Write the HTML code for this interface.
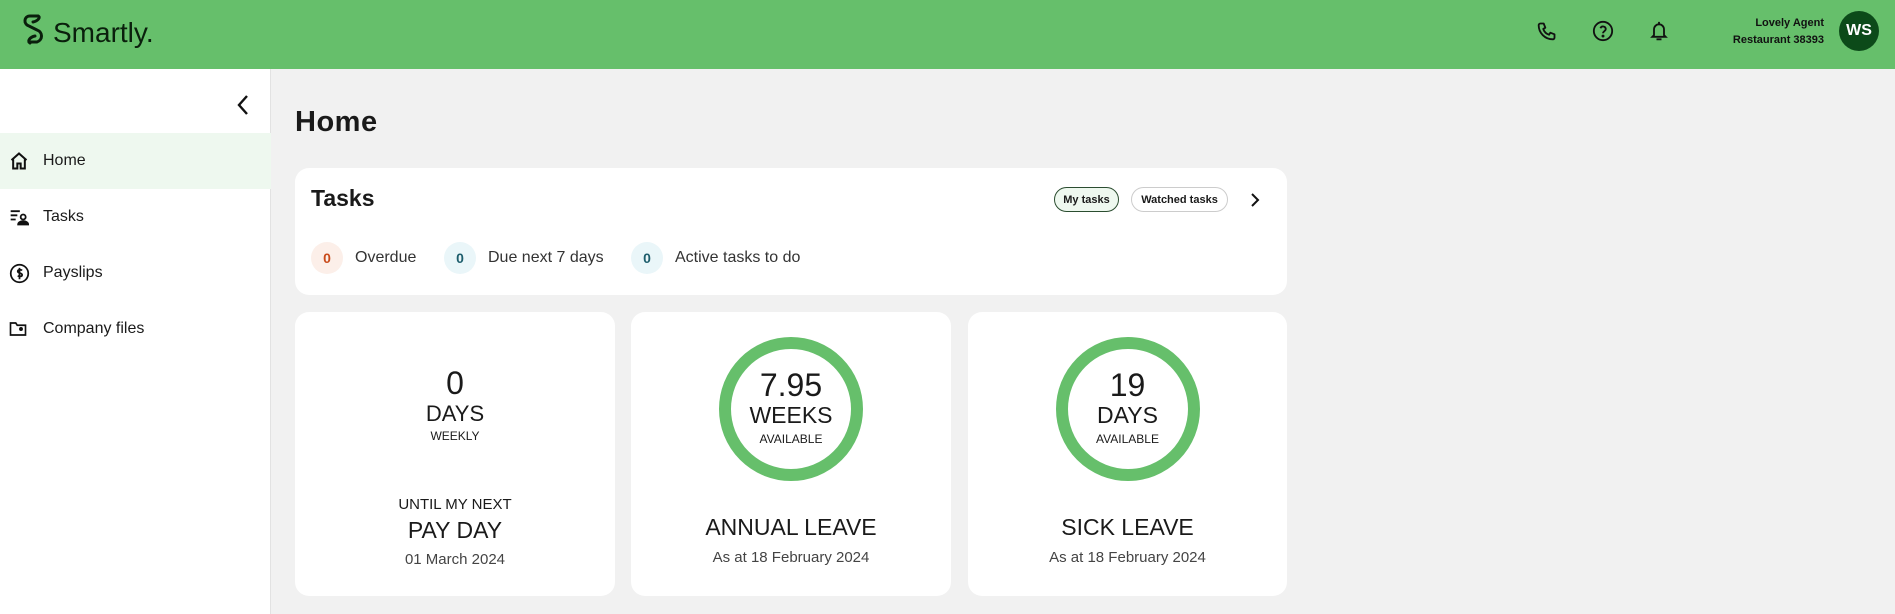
<!DOCTYPE html>
<html><head><meta charset="utf-8"><style>
*{box-sizing:border-box;margin:0;padding:0}
body{width:1895px;height:614px;overflow:hidden;background:#f1f1f1;font-family:"Liberation Sans",sans-serif;color:#1a1a1a;position:relative}
.hdr{position:absolute;left:0;top:0;width:1895px;height:69px;background:#66bf6b}
.side{position:absolute;left:0;top:69px;width:271px;height:545px;background:#fff;border-right:1px solid #e2e2e2}
.nav{position:absolute;left:0;width:271px;height:56px;display:flex;align-items:center;font-size:16px}
.nav svg{position:absolute;left:9px}
.nav span{position:absolute;left:43px}
.card{position:absolute;background:#fff;border-radius:14px}
.c{position:absolute;text-align:center;width:100%;left:0}
.pill{position:absolute;height:25px;border-radius:13px;font-size:11px;font-weight:bold;display:flex;align-items:center;justify-content:center}
.cnt{position:absolute;top:74px;display:flex;align-items:center;font-size:16px;color:#333}
.cnt b{width:32px;height:32px;border-radius:50%;display:inline-flex;align-items:center;justify-content:center;font-size:14px;margin-right:12px}
</style></head><body>
<div class="hdr">
 <svg style="position:absolute;left:21px;top:13px" width="26" height="34" viewBox="0 0 26 34" fill="none" stroke="#0a1f0c" stroke-width="3" stroke-linecap="round"><path d="M17 3 L9 3 C3 3 2 11 8 13 L16 17 C22 19 22 27 16 29 L8 29"/><path d="M12 9 C17 8 20 4 17 3"/><path d="M14 23 C9 24 6 28 9 30"/></svg>
 <div style="position:absolute;left:53px;top:17px;font-size:28px;color:#0a1f0c">Smartly.</div>
 <svg style="position:absolute;left:1537px;top:21px" width="20" height="20" viewBox="0 0 24 24" fill="none" stroke="#111" stroke-width="2.2" stroke-linejoin="round"><path d="M4 3h4l2 5-2.5 1.5a11 11 0 0 0 7 7L16 14l5 2v4a2 2 0 0 1-2 2A17 17 0 0 1 2 5a2 2 0 0 1 2-2z"/></svg>
 <svg style="position:absolute;left:1592px;top:20px" width="22" height="22" viewBox="0 0 24 24" fill="none" stroke="#111" stroke-width="2"><circle cx="12" cy="12" r="10"/><path d="M9.2 9a3 3 0 0 1 5.8 1c0 2-3 2.5-3 4.5"/><circle cx="12" cy="17.5" r=".6" fill="#111"/></svg>
 <svg style="position:absolute;left:1649px;top:20px" width="20" height="22" viewBox="0 0 24 26" fill="none" stroke="#111" stroke-width="2.2"><path d="M12 2v2M6 18V11a6 6 0 0 1 12 0v7l2 2H4z M9 23h6"/></svg>
 <div style="position:absolute;right:71px;top:15px;text-align:right;font-size:11px;font-weight:bold;line-height:17px;color:#111">Lovely Agent<br>Restaurant 38393</div>
 <div style="position:absolute;left:1839px;top:11px;width:40px;height:40px;border-radius:50%;background:#0c4a19;color:#fff;font-weight:bold;font-size:16px;display:flex;align-items:center;justify-content:center">WS</div>
</div>
<div class="side">
 <svg style="position:absolute;left:236px;top:25px" width="14" height="22" viewBox="0 0 14 22" fill="none" stroke="#111" stroke-width="2.4"><path d="M11 2 L3 11 L11 20"/></svg>
 <div class="nav" style="top:64px;background:#eef8ef"><svg width="20" height="20" viewBox="0 0 24 24" fill="none" stroke="#111" stroke-width="2.4"><path d="M3 11 L12 3 L21 11 M5 10v11h5v-6h4v6h5V10"/></svg><span>Home</span></div>
 <div class="nav" style="top:120px"><svg width="20" height="20" viewBox="0 0 24 24" fill="none" stroke="#111" stroke-width="2.2"><path d="M2 5h11M2 10h8M2 15h6"/><circle cx="17" cy="12" r="3"/><path d="M11 21a6 4 0 0 1 12 0z" fill="#111"/></svg><span>Tasks</span></div>
 <div class="nav" style="top:176px"><svg width="21" height="21" viewBox="0 0 24 24" fill="none" stroke="#111" stroke-width="2"><circle cx="12" cy="12" r="10"/><path d="M15 8.5c-1-1-5-1.5-5 1s5 1.5 5 4-4 2-5 1M12 5.5v13"/></svg><span>Payslips</span></div>
 <div class="nav" style="top:232px"><svg width="18" height="16" viewBox="0 0 24 20" fill="none" stroke="#111" stroke-width="2.2"><path d="M2 2h7l2 3h11v13H2z"/><circle cx="16" cy="10" r="1.5" fill="#111"/></svg><span>Company files</span></div>
</div>
<div style="position:absolute;left:295px;top:106px;font-size:29px;font-weight:bold;color:#1a1a1a;letter-spacing:.5px">Home</div>
<div class="card" style="left:295px;top:168px;width:992px;height:127px">
 <div style="position:absolute;left:16px;top:17px;font-size:23px;font-weight:bold">Tasks</div>
 <div class="pill" style="left:759px;top:19px;width:65px;border:1.5px solid #2b4d30;background:#eef8ef">My tasks</div>
 <div class="pill" style="left:836px;top:19px;width:97px;border:1.5px solid #ccc">Watched tasks</div>
 <svg style="position:absolute;left:955px;top:24px" width="10" height="16" viewBox="0 0 10 16" fill="none" stroke="#111" stroke-width="2"><path d="M2 2l6 6-6 6"/></svg>
 <div class="cnt" style="left:16px"><b style="background:#fcefe9;color:#c94a1a">0</b>Overdue</div>
 <div class="cnt" style="left:149px"><b style="background:#eaf6f9;color:#1d5d6c">0</b>Due next 7 days</div>
 <div class="cnt" style="left:336px"><b style="background:#eaf6f9;color:#1d5d6c">0</b>Active tasks to do</div>
</div>
<div class="card" style="left:295px;top:312px;width:320px;height:284px">
 <div class="c" style="top:53px;font-size:32px">0</div>
 <div class="c" style="top:89px;font-size:22px">DAYS</div>
 <div class="c" style="top:117px;font-size:12px">WEEKLY</div>
 <div class="c" style="top:184px;font-size:15px">UNTIL MY NEXT</div>
 <div class="c" style="top:205px;font-size:23px">PAY DAY</div>
 <div class="c" style="top:239px;font-size:15px;color:#444">01 March 2024</div>
</div>
<div class="card" style="left:631px;top:312px;width:320px;height:284px">
 <div style="position:absolute;left:88px;top:25px;width:144px;height:144px;border-radius:50%;border:12px solid #66bf6b"></div>
 <div class="c" style="top:55px;font-size:32px">7.95</div>
 <div class="c" style="top:90px;font-size:23px">WEEKS</div>
 <div class="c" style="top:120px;font-size:12px">AVAILABLE</div>
 <div class="c" style="top:202px;font-size:23px">ANNUAL LEAVE</div>
 <div class="c" style="top:237px;font-size:15px;color:#444">As at 18 February 2024</div>
</div>
<div class="card" style="left:968px;top:312px;width:319px;height:284px">
 <div style="position:absolute;left:88px;top:25px;width:144px;height:144px;border-radius:50%;border:12px solid #66bf6b"></div>
 <div class="c" style="top:55px;font-size:32px">19</div>
 <div class="c" style="top:90px;font-size:23px">DAYS</div>
 <div class="c" style="top:120px;font-size:12px">AVAILABLE</div>
 <div class="c" style="top:202px;font-size:23px">SICK LEAVE</div>
 <div class="c" style="top:237px;font-size:15px;color:#444">As at 18 February 2024</div>
</div>
</body></html>
